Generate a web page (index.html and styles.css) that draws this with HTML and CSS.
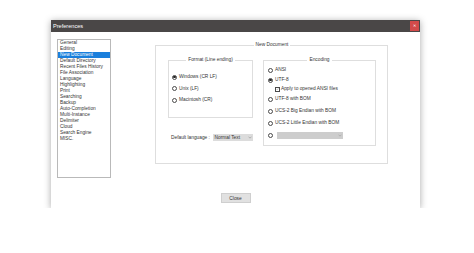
FILE: index.html
```html
<!DOCTYPE html>
<html>
<head>
<meta charset="utf-8">
<link rel="stylesheet" href="styles.css">
</head>
<body>
<div class="dialog">
  <div class="titlebar">
    <span class="title">Preferences</span>
    <span class="close">✕</span>
  </div>
  <div class="body">
    <div class="main">
      <ul class="list">
        <li>General</li>
        <li>Editing</li>
        <li class="sel">New Document</li>
        <li>Default Directory</li>
        <li>Recent Files History</li>
        <li>File Association</li>
        <li>Language</li>
        <li>Highlighting</li>
        <li>Print</li>
        <li>Searching</li>
        <li>Backup</li>
        <li>Auto-Completion</li>
        <li>Multi-Instance</li>
        <li>Delimiter</li>
        <li>Cloud</li>
        <li>Search Engine</li>
        <li>MISC.</li>
      </ul>
      <fieldset class="group newdoc">
        <legend>New Document</legend>
        <div class="cols">
          <div class="leftcol">
            <fieldset class="group format">
              <legend>Format (Line ending)</legend>
              <div class="opts fmt-opts">
                <div class="opt"><span class="radio on"></span>Windows (CR LF)</div>
                <div class="opt"><span class="radio"></span>Unix (LF)</div>
                <div class="opt"><span class="radio"></span>Macintosh (CR)</div>
              </div>
            </fieldset>
            <div class="lang">
              <span class="lang-label">Default language :</span>
              <span class="combo lang-combo"><span>Normal Text</span><svg class="chev" viewBox="0 0 6 4" width="4" height="3"><path d="M0.8 0.8 L3 3 L5.2 0.8" fill="none" stroke="#888" stroke-width="0.8"/></svg></span>
            </div>
          </div>
          <fieldset class="group enc">
            <legend>Encoding</legend>
            <div class="opts enc-opts">
              <div class="opt"><span class="radio"></span>ANSI</div>
              <div class="opt"><span class="radio on"></span>UTF-8</div>
              <div class="opt sub"><span class="check"><svg viewBox="0 0 10 10" width="4" height="4"><path d="M1.8 5.2 L4 7.4 L8.4 2.4" fill="none" stroke="#444" stroke-width="1"/></svg></span>Apply to opened ANSI files</div>
              <div class="opt"><span class="radio"></span>UTF-8 with BOM</div>
              <div class="opt sp"><span class="radio"></span>UCS-2 Big Endian with BOM</div>
              <div class="opt sp"><span class="radio"></span>UCS-2 Little Endian with BOM</div>
              <div class="opt sp"><span class="radio"></span><span class="combo enc-combo"><span></span><svg class="chev" viewBox="0 0 6 4" width="4" height="3"><path d="M0.8 0.8 L3 3 L5.2 0.8" fill="none" stroke="#999" stroke-width="0.8"/></svg></span></div>
            </div>
          </fieldset>
        </div>
      </fieldset>
    </div>
    <div class="footer">
      <button class="btn">Close</button>
    </div>
  </div>
</div>
</body>
</html>
```

FILE: styles.css
```css
* { box-sizing: border-box; }
html, body { margin: 0; padding: 0; background: #ffffff; }
body {
  font-family: "Liberation Sans", Arial, sans-serif;
  font-size: 4.8px;
  line-height: 6px;
  color: #333333;
}
.dialog {
  width: 369px;
  height: 188px;
  margin: 20px 0 0 51px;
  background: #ffffff;
  box-shadow: 0 1px 7px rgba(0,0,0,0.35);
  display: flex;
  flex-direction: column;
}
.titlebar {
  height: 12px;
  background: #4a4747;
  display: flex;
  align-items: center;
  justify-content: space-between;
  padding-left: 2px;
}
.title { color: #ffffff; font-size: 5.6px; }
.close {
  width: 9px;
  height: 10px;
  margin-right: 1px;
  background: #d24a4a;
  color: #ffffff;
  font-size: 4px;
  line-height: 10px;
  text-align: center;
}
.body { flex: 1; display: flex; flex-direction: column; }
.main { display: flex; align-items: flex-start; padding: 7px 0 0 6px; }
.list {
  list-style: none;
  margin: 0;
  padding: 0;
  width: 54px;
  height: 139px;
  border: 1px solid #b9b9b9;
}
.list li { height: 6px; padding-left: 2px; white-space: nowrap; }
.list li.sel { background: #1a7fdc; color: #ffffff; }

fieldset.group {
  margin: 0;
  padding: 0;
  border: 1px solid #dedede;
  min-inline-size: 0;
}
fieldset.group > legend {
  margin: 0 auto;
  padding: 0 2px;
  line-height: 6px;
}
.newdoc {
  margin: 3px 0 0 44px !important;
  width: 233px;
  height: 122px;
  padding: 9px 11px 0 12px !important;
}
.cols { display: flex; gap: 10px; align-items: flex-start; }
.leftcol { display: flex; flex-direction: column; width: 85px; }
.format { width: 85px; height: 61px; }
.enc { width: 114px; height: 89px; }
.opts { display: flex; flex-direction: column; }
.fmt-opts { padding: 11px 0 0 3px; gap: 5.5px; }
.enc-opts { padding: 4px 0 0 4px; gap: 4px; }
.opt { display: flex; align-items: center; height: 6px; white-space: nowrap; }
.opt.sub { margin-top: -1px; padding-left: 6.5px; }
.opt.sp { margin-top: 2px; }
.radio {
  width: 5px;
  height: 5px;
  border: 0.6px solid #4a4a4a;
  border-radius: 50%;
  background: #ffffff;
  margin-right: 2px;
  flex: none;
  display: flex;
  align-items: center;
  justify-content: center;
}
.radio.on::after {
  content: "";
  width: 2.8px;
  height: 2.8px;
  border-radius: 50%;
  background: #222222;
}
.check {
  width: 5px;
  height: 5px;
  border: 0.6px solid #4a4a4a;
  margin-right: 1.5px;
  flex: none;
  display: flex;
  align-items: center;
  justify-content: center;
  background: #ffffff;
}
.check svg { display: block; }
.lang {
  display: flex;
  align-items: center;
  margin-top: 16px;
  padding-left: 3px;
  height: 7px;
  white-space: nowrap;
}
.lang-label { flex: none; width: 42px; }
.combo {
  display: flex;
  align-items: center;
  justify-content: space-between;
  height: 7px;
  padding: 0 1.5px;
  background: #dcdcdc;
  flex: none;
}
.lang-combo { width: 40px; }
.enc-combo { width: 66px; margin-left: 2px; background: #cdcdcd; }
.chev { display: block; flex: none; }
.footer { display: flex; justify-content: center; padding-top: 15px; }
.btn {
  width: 30px;
  height: 10px;
  padding: 0;
  border: 1px solid #cfcfcf;
  background: #e1e1e1;
  font-family: "Liberation Sans", Arial, sans-serif;
  font-size: 4.8px;
  color: #333333;
}
```
